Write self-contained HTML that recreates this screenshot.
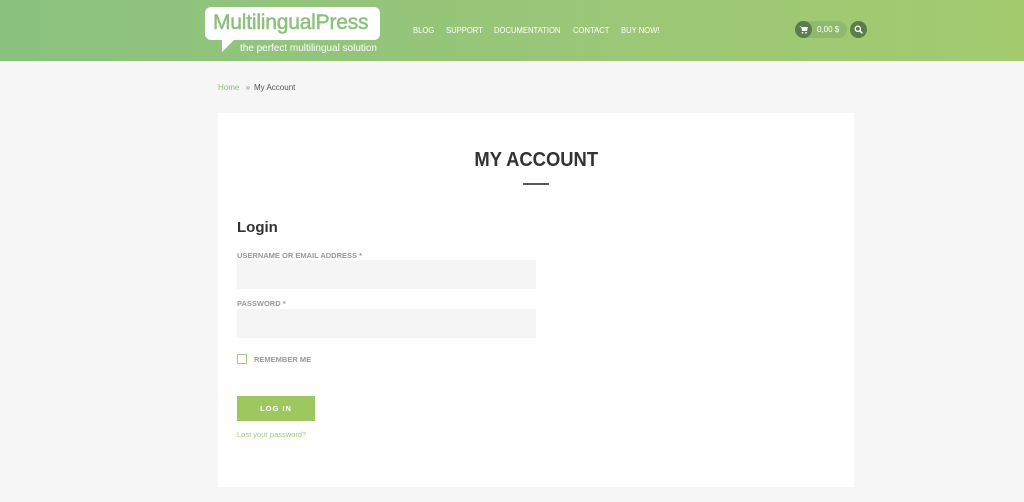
<!DOCTYPE html>
<html><head><meta charset="utf-8"><style>
*{margin:0;padding:0;box-sizing:border-box}
body{width:1024px;height:502px;background:#f6f6f6;font-family:"Liberation Sans",sans-serif;position:relative;overflow:hidden}
.hdr{position:absolute;left:0;top:0;width:1024px;height:61px;background:linear-gradient(90deg,#8ac17f,#9bc777 60%,#a3cb6e)}
.logo{position:absolute;left:205px;top:7px;width:175px;height:33px;background:#fff;border-radius:6px}
.logo span{position:absolute;left:8px;top:4px;font-size:21px;color:#8cc07c;letter-spacing:-0.2px;-webkit-text-stroke:0.5px #8cc07c;white-space:nowrap}
.tail{position:absolute;left:222px;top:38px;width:0;height:0;border-left:14px solid #fff;border-bottom:14px solid transparent}
.sub{position:absolute;left:240px;top:42px;font-size:10.5px;color:#fff;transform:scaleX(0.95);transform-origin:left;white-space:nowrap}
.nav{position:absolute;top:25px;font-size:8.5px;color:#fff;transform:scaleX(0.9);transform-origin:left;white-space:nowrap}
.cart{position:absolute;left:795px;top:21px;width:52px;height:17px;border-radius:9px;background:#8fba6e}
.ci{position:absolute;left:795px;top:21px;width:17px;height:17px;border-radius:50%;background:#5b7d4a}
.srch{position:absolute;left:850px;top:21px;width:17px;height:17px;border-radius:50%;background:#5b7d4a}
.card{position:absolute;left:218px;top:113px;width:636px;height:374px;background:#fff}
.lbl{position:absolute;left:237px;font-size:7.5px;font-weight:bold;color:#999;white-space:nowrap}
.inp{position:absolute;left:237px;width:299px;height:29px;background:#f5f5f5}
</style></head><body>
<div class="hdr"></div>
<div class="logo"><span>MultilingualPress</span></div>
<div class="tail"></div>
<div class="sub">the perfect multilingual solution</div>
<div class="nav" style="left:413px">BLOG</div>
<div class="nav" style="left:446px">SUPPORT</div>
<div class="nav" style="left:494px">DOCUMENTATION</div>
<div class="nav" style="left:573px">CONTACT</div>
<div class="nav" style="left:621px">BUY NOW!</div>
<div class="cart"></div><div class="ci"></div>
<svg style="position:absolute;left:799px;top:25px" width="9" height="9" viewBox="0 0 9 9"><path d="M0 1h2l1 5h5l1-4H2.5" fill="#fff"/><circle cx="3.5" cy="7.8" r="0.9" fill="#fff"/><circle cx="7" cy="7.8" r="0.9" fill="#fff"/></svg>
<div style="position:absolute;left:817px;top:25px;font-size:8px;color:#fff">0,00 $</div>
<div class="srch"></div>
<svg style="position:absolute;left:854px;top:25px" width="9" height="9" viewBox="0 0 9 9"><circle cx="3.8" cy="3.8" r="2.6" fill="none" stroke="#fff" stroke-width="1.3"/><path d="M5.7 5.7L8.3 8.3" stroke="#fff" stroke-width="1.6"/></svg>
<div style="position:absolute;left:218px;top:83px;font-size:8px;color:#8cc07c">Home <span style="color:#888;margin:0 4px">»</span><span style="color:#555">My Account</span></div>
<div class="card"></div>
<div style="position:absolute;left:218px;width:636px;top:149px;text-align:center;font-size:20px;font-weight:bold;color:#333"><span style="display:inline-block;transform:scaleX(0.92)">MY ACCOUNT</span></div>
<div style="position:absolute;left:523px;top:183px;width:26px;height:2px;background:#555"></div>
<div style="position:absolute;left:237px;top:219px;font-size:15px;font-weight:bold;color:#333">Login</div>
<div class="lbl" style="top:251px">USERNAME OR EMAIL ADDRESS *</div>
<div class="inp" style="top:260px"></div>
<div class="lbl" style="top:299px">PASSWORD *</div>
<div class="inp" style="top:309px"></div>
<div style="position:absolute;left:237px;top:354px;width:10px;height:10px;border:1.5px solid #a3c97a;border-radius:1px"></div>
<div class="lbl" style="left:254px;top:355px">REMEMBER ME</div>
<div style="position:absolute;left:237px;top:396px;width:78px;height:25px;background:#9fc760;color:#fff;font-size:7.5px;font-weight:bold;letter-spacing:1px;text-align:center;line-height:25px">LOG IN</div>
<div style="position:absolute;left:237px;top:430px;font-size:7.5px;color:#a3c97a">Lost your password?</div>
</body></html>
